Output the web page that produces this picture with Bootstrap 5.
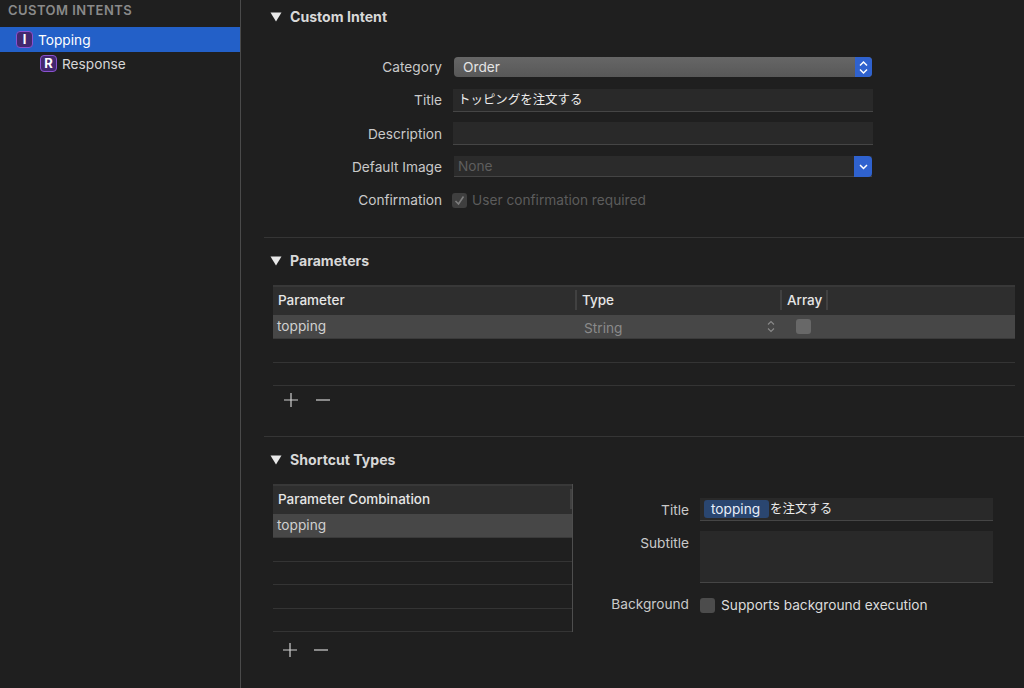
<!DOCTYPE html>
<html lang="ja">
<head>
<meta charset="utf-8">
<title>Custom Intent</title>
<link rel="stylesheet" href="https://cdn.jsdelivr.net/npm/bootstrap@5.3.0/dist/css/bootstrap.min.css">
<style>
html,body{height:100%}
body{background:#1f1f1f;color:#dcdcdc;font-family:Inter,"Noto Sans CJK JP",sans-serif;font-size:13.7px;line-height:20px;overflow:hidden}
.shell{height:688px;width:1024px}
.side{width:241px;flex:none;border-right:1px solid #4a4a4a;background:#1f1f1f}
.side-head{height:27px;padding:0 0 0 8px;color:#8a8a8a;font-weight:600;font-size:13px;line-height:20px;letter-spacing:.45px}
.side-row{height:25px;color:#d6d6d6;gap:5px}
.side-row.on{background:#2360c8;color:#fff;padding-left:16px}
.side-row.sub{padding-left:40px;height:23px}
.tile{width:17px;height:17px;border-radius:4px;background:#43286f;border:1.5px solid #8a52cf;color:#fff;font-weight:700;font-size:13px;line-height:14px;text-align:center;flex:none}
.pane{width:783px;flex:none}
.sect{margin-left:23px;padding-left:6px;border-bottom:1px solid #353535}
.sect-a{height:238px;padding-top:7px}
.sect-b{height:199px;padding-top:13px}
.sect-c{border-bottom:0;padding-top:13px}
.sect-head{font-weight:650;font-size:14.1px;color:#d8d8d8;gap:8px;height:20px}
.form-area{margin-top:29px;gap:11.25px}
.lab{width:173px;flex:none;text-align:right;color:#c9c9c9;margin-right:11px;padding-right:1px}
.fld-row{height:22px}
.popup{width:418px;height:20px;border-radius:4px;background:linear-gradient(#666,#585858);color:#e4e4e4;padding-left:9px;position:relative}
.popup .cap{position:absolute;top:0;right:0;bottom:0;width:17px;background:#2f62cf;border-radius:0 4px 4px 0}
.popup.off{background:#2b2b2b;color:#5e5e5e;border-radius:0;border-bottom:1px solid #444;padding-left:4px;height:21px}
.popup.off .cap{width:18px;bottom:-1px}
.field{width:420px;height:23px;background:#292929;border-bottom:1px solid #454545;padding-left:5px;color:#ececec;margin-left:-1px}
.jp{font-size:12.45px}
.tick{width:15px;height:15px;border-radius:3px;background:#3f3f3f;margin-left:-2px;margin-right:5px;flex:none}
.dim{color:#5c5c5c}
.grid-box{background:#1f1f1f;margin-left:3px}
.thead{height:30px;background:#2e2e2e;border-top:2px solid #383838;color:#e6e6e6;font-weight:500;font-size:13.5px;padding-bottom:2px}
.th{height:20px;border-right:2px solid #414141;padding-left:5px;line-height:20px}
.tr-on{height:24px;background:#474747;color:#d0d0d0;border-bottom:1px solid #3a3a3a;padding-left:4px}
.lift{margin-top:-2px}
.tr-empty{height:23.5px;border-bottom:1px solid #343434}
.plus-row{height:28px;padding-left:11px;gap:18px}
.p-table{margin-top:14px;width:742px}
.s-table{width:300px;border-right:1px solid #4e4e4e}
.s-wrap{margin-top:14px;margin-left:3px;width:300px}
.s-wrap .plus-row{margin-top:4px;padding-left:10px;gap:17px}
.s-right{width:420px;padding-top:28px}
.lab2{width:116px;flex:none;text-align:right;color:#c9c9c9;margin-right:11px}
.field2{width:293px;background:#292929;border-bottom:1px solid #454545;color:#ececec}
.token{display:inline-block;background:#2a4670;color:#e8eef8;border-radius:3px;width:65px;height:18px;line-height:18px;padding-left:7px;margin:0 1px 0 4px;font-size:13.7px}
.box{width:15px;height:15px;border-radius:3px;background:#4c4c4c;flex:none}
.box-lt{background:#686868;margin-left:20px}
.mute{color:#8a8a8a}
</style>
</head>
<body>
<div class="shell d-flex">
  <aside class="side">
    <div class="side-head">CUSTOM INTENTS</div>
    <div class="side-row on d-flex align-items-center"><span class="tile">I</span><span>Topping</span></div>
    <div class="side-row sub d-flex align-items-center"><span class="tile">R</span><span>Response</span></div>
  </aside>
  <main class="pane">
    <section class="sect sect-a">
      <div class="sect-head d-flex align-items-center">
        <svg width="12" height="10" viewBox="0 0 12 10"><path d="M0.5 0.5h11L6 9.5z" fill="#e8e8e8"/></svg><span>Custom Intent</span>
      </div>
      <div class="form-area d-flex flex-column">
        <div class="fld-row d-flex align-items-center"><span class="lab">Category</span>
          <div class="popup d-flex align-items-center">Order<span class="cap d-flex align-items-center justify-content-center"><svg width="11" height="15" viewBox="0 0 11 15"><path d="M2 5.5L5.5 2L9 5.5M2 9.5L5.5 13L9 9.5" fill="none" stroke="#fff" stroke-width="1.5"/></svg></span></div>
        </div>
        <div class="fld-row d-flex align-items-center"><span class="lab">Title</span><div class="field d-flex align-items-center jp">トッピングを注文する</div></div>
        <div class="fld-row d-flex align-items-center"><span class="lab">Description</span><div class="field"></div></div>
        <div class="fld-row d-flex align-items-center"><span class="lab">Default Image</span>
          <div class="popup off d-flex align-items-center">None<span class="cap d-flex align-items-center justify-content-center"><svg width="11" height="8" viewBox="0 0 11 8"><path d="M2 2L5.5 5.5L9 2" fill="none" stroke="#fff" stroke-width="1.5"/></svg></span></div>
        </div>
        <div class="fld-row d-flex align-items-center"><span class="lab">Confirmation</span><span class="tick d-flex align-items-center justify-content-center"><svg width="11" height="11" viewBox="0 0 11 11"><path d="M1.5 6L4.5 9L9.5 1.5" fill="none" stroke="#7d7d7d" stroke-width="1.6"/></svg></span><span class="dim">User confirmation required</span></div>
      </div>
    </section>
    <section class="sect sect-b">
      <div class="sect-head d-flex align-items-center">
        <svg width="12" height="10" viewBox="0 0 12 10"><path d="M0.5 0.5h11L6 9.5z" fill="#e8e8e8"/></svg><span>Parameters</span>
      </div>
      <div class="grid-box p-table">
        <div class="thead d-flex align-items-center"><div class="th" style="width:304px">Parameter</div><div class="th" style="width:205px">Type</div><div class="th" style="width:46px">Array</div></div>
        <div class="tr-on d-flex align-items-center"><span class="lift" style="width:307px">topping</span><span class="mute" style="width:182px;padding-top:3px">String</span><svg width="10" height="15" viewBox="0 0 10 15"><path d="M2 5.5L5 2.5L8 5.5M2 9.5L5 12.5L8 9.5" fill="none" stroke="#8a8a8a" stroke-width="1.1"/></svg><span class="box box-lt"></span></div>
        <div class="tr-empty"></div>
        <div class="tr-empty"></div>
        <div class="plus-row d-flex align-items-center">
          <svg width="14" height="14" viewBox="0 0 14 14"><path d="M7 0v14M0 7h14" stroke="#d0d0d0" stroke-width="1.2"/></svg>
          <svg width="14" height="14" viewBox="0 0 14 14"><path d="M0 7h14" stroke="#d0d0d0" stroke-width="1.2"/></svg>
        </div>
      </div>
    </section>
    <section class="sect sect-c">
      <div class="sect-head d-flex align-items-center">
        <svg width="12" height="10" viewBox="0 0 12 10"><path d="M0.5 0.5h11L6 9.5z" fill="#e8e8e8"/></svg><span>Shortcut Types</span>
      </div>
      <div class="d-flex">
        <div class="s-wrap">
          <div class="s-table">
            <div class="thead d-flex align-items-center"><div class="th" style="width:299px">Parameter Combination</div></div>
            <div class="tr-on d-flex align-items-center"><span class="lift">topping</span></div>
            <div class="tr-empty"></div><div class="tr-empty"></div><div class="tr-empty"></div><div class="tr-empty"></div>
          </div>
          <div class="plus-row d-flex align-items-center">
            <svg width="14" height="14" viewBox="0 0 14 14"><path d="M7 0v14M0 7h14" stroke="#d0d0d0" stroke-width="1.2"/></svg>
            <svg width="14" height="14" viewBox="0 0 14 14"><path d="M0 7h14" stroke="#d0d0d0" stroke-width="1.2"/></svg>
          </div>
        </div>
        <div class="s-right d-flex flex-column">
          <div class="d-flex align-items-center"><span class="lab2">Title</span><div class="field2 d-flex align-items-center jp" style="height:23px"><span class="token">topping</span>を注文する</div></div>
          <div class="d-flex align-items-start" style="margin-top:10px"><span class="lab2" style="margin-top:2px">Subtitle</span><div class="field2" style="height:52px"></div></div>
          <div class="d-flex align-items-center" style="margin-top:12px"><span class="lab2 lift">Background</span><span class="box" style="margin-right:6px"></span><span>Supports background execution</span></div>
        </div>
      </div>
    </section>
  </main>
</div>
<script src="https://cdn.jsdelivr.net/npm/bootstrap@5.3.0/dist/js/bootstrap.bundle.min.js"></script>
</body>
</html>
